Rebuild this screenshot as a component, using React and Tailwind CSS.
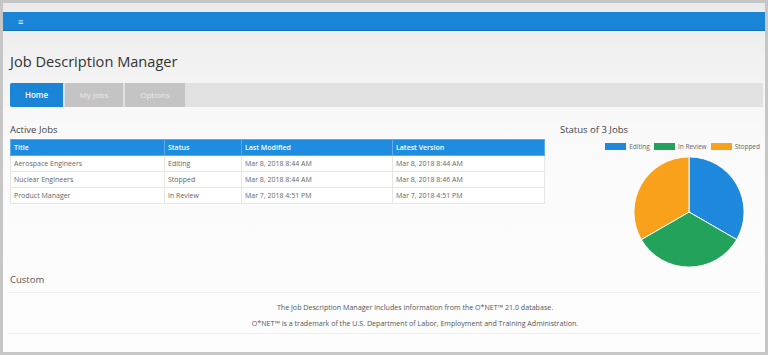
import React from "react";

const rows = [
  ["Aerospace Engineers", "Editing", "Mar 8, 2018 8:44 AM", "Mar 8, 2018 8:44 AM"],
  ["Nuclear Engineers", "Stopped", "Mar 8, 2018 8:44 AM", "Mar 8, 2018 8:46 AM"],
  ["Product Manager", "In Review", "Mar 7, 2018 4:51 PM", "Mar 7, 2018 4:51 PM"],
];

function Pie() {
  return (
    <svg width="116" height="116" viewBox="0 0 120 120">
      <path d="M60 60 L60 3 A57 57 0 0 1 109.36 88.5 Z" fill="#1e88dc" stroke="#fff" strokeWidth="1" />
      <path d="M60 60 L109.36 88.5 A57 57 0 0 1 10.64 88.5 Z" fill="#23a25c" stroke="#fff" strokeWidth="1" />
      <path d="M60 60 L10.64 88.5 A57 57 0 0 1 60 3 Z" fill="#f9a11b" stroke="#fff" strokeWidth="1" />
    </svg>
  );
}

function Legend({ color, label }) {
  return (
    <div className="flex items-center gap-[3px]">
      <span className="block w-[21px] h-[7px]" style={{ background: color }} />
      <span className="text-[6.5px] text-[#666]">{label}</span>
    </div>
  );
}

export default function App() {
  return (
    <div
      className="w-[768px] h-[355px] bg-[#c6c6c6] p-[3px] overflow-hidden"
      style={{ fontFamily: "'Open Sans', 'Liberation Sans', sans-serif" }}
    >
      <div className="w-full h-full bg-gradient-to-b from-[#f3f3f3] via-[#fbfbfb] to-[#fdfdfd] flex flex-col">
        <div className="bg-[#ebebeb] pt-[9px]">
          <div className="h-[19px] bg-[#1a84d6] flex items-center pl-[15px] border-b border-[#1670b8]">
            <span className="text-white text-[9px] leading-none">≡</span>
          </div>
        </div>
        <div className="bg-gradient-to-b from-[#eeeeee] to-[#f6f6f6] pl-[7px] pr-[2px] pt-[18px]">
          <h1 className="text-[14.6px] leading-[24px] text-[#333] font-medium m-0">Job Description Manager</h1>
          <div className="mt-[10px] flex h-[24px] bg-[#e1e1e1] gap-[2px]">
            <div className="w-[53px] bg-[#1a84d6] text-white text-[8px] font-semibold flex items-center justify-center rounded-l-[2px]">
              Home
            </div>
            <div className="w-[58px] bg-[#c4c4c4] text-[#eaeaea] text-[8px] flex items-center justify-center">My Jobs</div>
            <div className="w-[60px] bg-[#c4c4c4] text-[#eaeaea] text-[8px] flex items-center justify-center">Options</div>
          </div>
        </div>
        <div className="flex pl-[7px] pt-[16px]">
          <div className="w-[535px]">
            <div className="text-[9.5px] text-[#444] leading-[14px]">Active Jobs</div>
            <table className="mt-[2px] w-full border-collapse text-[7px] leading-[15px] bg-white">
              <thead>
                <tr className="bg-[#1e8de0] text-white font-semibold">
                  <th className="w-[154px] text-left font-semibold px-[3px] h-[16px] border border-[#5fa9e6]">Title</th>
                  <th className="w-[77px] text-left font-semibold px-[3px] border border-[#5fa9e6]">Status</th>
                  <th className="w-[151px] text-left font-semibold px-[3px] border border-[#5fa9e6]">Last Modified</th>
                  <th className="text-left font-semibold px-[3px] border border-[#5fa9e6]">Latest Version</th>
                </tr>
              </thead>
              <tbody>
                {rows.map((r) => (
                  <tr key={r[0]} className="text-[#666]">
                    {r.map((c, i) => (
                      <td key={i} className="px-[3px] h-[15.5px] border border-[#e6e6e6]">{c}</td>
                    ))}
                  </tr>
                ))}
              </tbody>
            </table>
          </div>
          <div className="ml-[15px] flex-1 pr-[3px]">
            <div className="text-[9.5px] text-[#444] leading-[14px]">Status of 3 Jobs</div>
            <div className="mt-[5px] flex justify-end gap-[4px] pr-[2px]">
              <Legend color="#1e88dc" label="Editing" />
              <Legend color="#23a25c" label="In Review" />
              <Legend color="#f9a11b" label="Stopped" />
            </div>
            <div className="mt-[2px] pl-[71px]">
              <Pie />
            </div>
          </div>
        </div>
        <div className="pl-[7px] mt-[3px] text-[9.5px] text-[#555] leading-[14px]">Custom</div>
        <div className="mx-[5px] mt-[5px] border-t border-[#eeeeee] pt-[6px] pb-[2px] pl-[62px] border-b text-center text-[7.1px] text-[#555] leading-[16px]">
          <div>The Job Description Manager includes information from the O*NET™ 21.0 database.</div>
          <div>O*NET™ is a trademark of the U.S. Department of Labor, Employment and Training Administration.</div>
        </div>
      </div>
    </div>
  );
}
